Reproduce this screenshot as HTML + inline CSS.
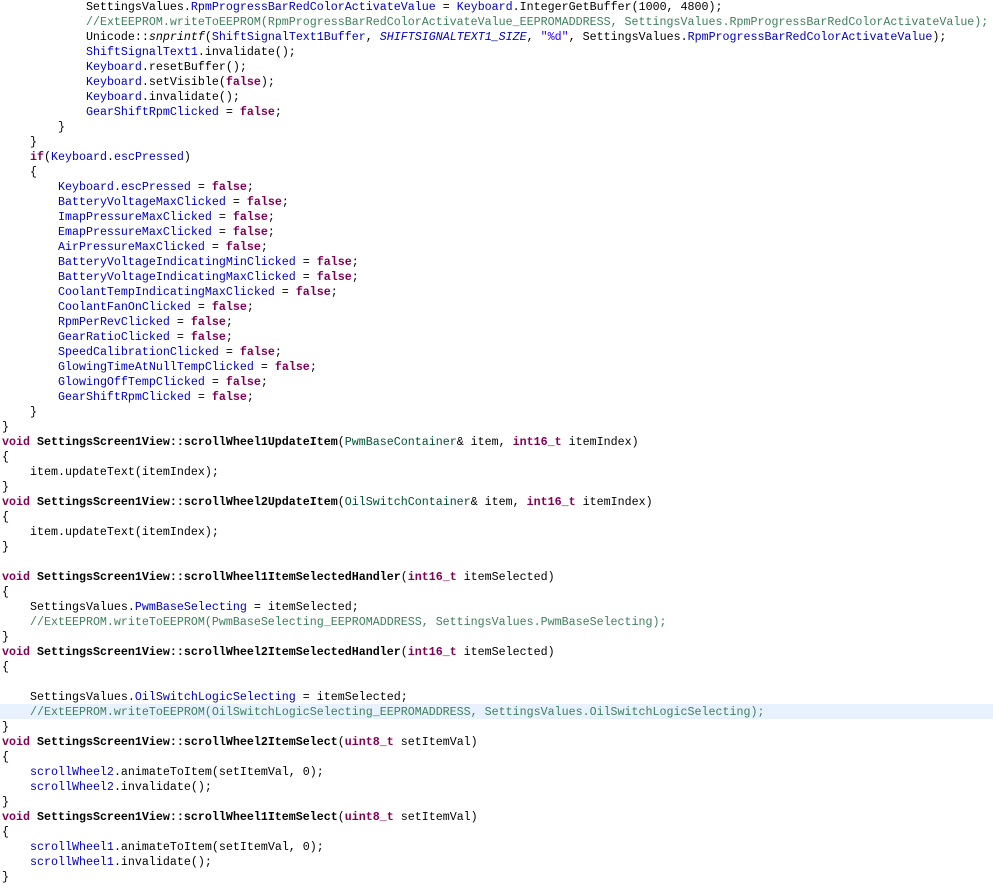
<!DOCTYPE html>
<html><head><meta charset="utf-8"><style>
html,body{margin:0;padding:0;background:#fff;width:993px;height:895px;overflow:hidden}
pre{margin:0;position:absolute;left:2px;top:0px;font-family:"Liberation Mono",monospace;font-size:11.67px;line-height:15px;color:#000}
.f{color:#0000c0}.k{color:#7f0055;font-weight:bold}.c{color:#3f7f5f}.s{color:#2a00ff}.t{color:#005032}.b{font-weight:bold}.i{font-style:italic}.m{color:#0000c0;font-style:italic}
.hl{position:absolute;left:0;top:704px;width:993px;height:15px;background:#e8f2fe}
</style></head><body>
<div class="hl"></div>
<pre>            SettingsValues.<span class="f">RpmProgressBarRedColorActivateValue</span> = <span class="f">Keyboard</span>.IntegerGetBuffer(1000, 4800);
            <span class="c">//ExtEEPROM.writeToEEPROM(RpmProgressBarRedColorActivateValue_EEPROMADDRESS, SettingsValues.RpmProgressBarRedColorActivateValue);</span>
            Unicode::<span class="i">snprintf</span>(<span class="f">ShiftSignalText1Buffer</span>, <span class="m">SHIFTSIGNALTEXT1_SIZE</span>, <span class="s">"%d"</span>, SettingsValues.<span class="f">RpmProgressBarRedColorActivateValue</span>);
            <span class="f">ShiftSignalText1</span>.invalidate();
            <span class="f">Keyboard</span>.resetBuffer();
            <span class="f">Keyboard</span>.setVisible(<span class="k">false</span>);
            <span class="f">Keyboard</span>.invalidate();
            <span class="f">GearShiftRpmClicked</span> = <span class="k">false</span>;
        }
    }
    <span class="k">if</span>(<span class="f">Keyboard</span>.<span class="f">escPressed</span>)
    {
        <span class="f">Keyboard</span>.<span class="f">escPressed</span> = <span class="k">false</span>;
        <span class="f">BatteryVoltageMaxClicked</span> = <span class="k">false</span>;
        <span class="f">ImapPressureMaxClicked</span> = <span class="k">false</span>;
        <span class="f">EmapPressureMaxClicked</span> = <span class="k">false</span>;
        <span class="f">AirPressureMaxClicked</span> = <span class="k">false</span>;
        <span class="f">BatteryVoltageIndicatingMinClicked</span> = <span class="k">false</span>;
        <span class="f">BatteryVoltageIndicatingMaxClicked</span> = <span class="k">false</span>;
        <span class="f">CoolantTempIndicatingMaxClicked</span> = <span class="k">false</span>;
        <span class="f">CoolantFanOnClicked</span> = <span class="k">false</span>;
        <span class="f">RpmPerRevClicked</span> = <span class="k">false</span>;
        <span class="f">GearRatioClicked</span> = <span class="k">false</span>;
        <span class="f">SpeedCalibrationClicked</span> = <span class="k">false</span>;
        <span class="f">GlowingTimeAtNullTempClicked</span> = <span class="k">false</span>;
        <span class="f">GlowingOffTempClicked</span> = <span class="k">false</span>;
        <span class="f">GearShiftRpmClicked</span> = <span class="k">false</span>;
    }
}
<span class="k">void</span> <span class="b">SettingsScreen1View::scrollWheel1UpdateItem</span>(<span class="t">PwmBaseContainer</span>&amp; item, <span class="k">int16_t</span> itemIndex)
{
    item.updateText(itemIndex);
}
<span class="k">void</span> <span class="b">SettingsScreen1View::scrollWheel2UpdateItem</span>(<span class="t">OilSwitchContainer</span>&amp; item, <span class="k">int16_t</span> itemIndex)
{
    item.updateText(itemIndex);
}

<span class="k">void</span> <span class="b">SettingsScreen1View::scrollWheel1ItemSelectedHandler</span>(<span class="k">int16_t</span> itemSelected)
{
    SettingsValues.<span class="f">PwmBaseSelecting</span> = itemSelected;
    <span class="c">//ExtEEPROM.writeToEEPROM(PwmBaseSelecting_EEPROMADDRESS, SettingsValues.PwmBaseSelecting);</span>
}
<span class="k">void</span> <span class="b">SettingsScreen1View::scrollWheel2ItemSelectedHandler</span>(<span class="k">int16_t</span> itemSelected)
{

    SettingsValues.<span class="f">OilSwitchLogicSelecting</span> = itemSelected;
    <span class="c">//ExtEEPROM.writeToEEPROM(OilSwitchLogicSelecting_EEPROMADDRESS, SettingsValues.OilSwitchLogicSelecting);</span>
}
<span class="k">void</span> <span class="b">SettingsScreen1View::scrollWheel2ItemSelect</span>(<span class="k">uint8_t</span> setItemVal)
{
    <span class="f">scrollWheel2</span>.animateToItem(setItemVal, 0);
    <span class="f">scrollWheel2</span>.invalidate();
}
<span class="k">void</span> <span class="b">SettingsScreen1View::scrollWheel1ItemSelect</span>(<span class="k">uint8_t</span> setItemVal)
{
    <span class="f">scrollWheel1</span>.animateToItem(setItemVal, 0);
    <span class="f">scrollWheel1</span>.invalidate();
}</pre>
</body></html>
